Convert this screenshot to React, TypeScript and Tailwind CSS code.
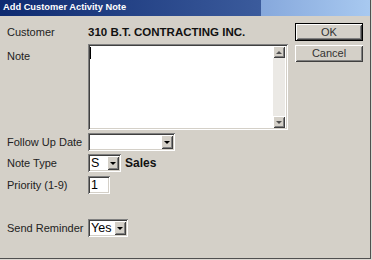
import React from "react";

const raised =
  "shadow-[inset_1px_1px_0_#ffffff,inset_-1px_-1px_0_#404040,inset_2px_2px_0_#d4d0c8,inset_-2px_-2px_0_#808080]";
const sunken =
  "shadow-[inset_1px_1px_0_#808080,inset_-1px_-1px_0_#ffffff,inset_2px_2px_0_#404040,inset_-2px_-2px_0_#d4d0c8]";

function DownArrow({ color = "border-t-black" }: { color?: string }) {
  return <div className={`w-0 h-0 border-x-[3px] border-x-transparent border-t-[3px] ${color}`} />;
}
function UpArrow() {
  return <div className="w-0 h-0 border-x-[3px] border-x-transparent border-b-[3px] border-b-[#505050]" />;
}

function DropBtn() {
  return (
    <div className={`w-[12px] h-full bg-[#d4d0c8] ${raised} flex items-center justify-center`}>
      <DownArrow />
    </div>
  );
}

function Combo({ w, text }: { w: string; text?: string }) {
  return (
    <div className={`${w} h-[18px] bg-white ${sunken} p-[2px] flex`}>
      <div className="flex-1 flex items-center pl-[1px] text-[12.5px] text-black leading-none">{text}</div>
      <DropBtn />
    </div>
  );
}

function Row({ label, children, className = "" }: { label: string; children?: React.ReactNode; className?: string }) {
  return (
    <div className={`flex items-center h-[18px] ${className}`}>
      <div className="w-[81px] text-[11px] text-[#222]">{label}</div>
      {children}
    </div>
  );
}

export default function App() {
  return (
    <div className="w-[372px] h-[260px] bg-[#dcd8d2] font-['Liberation_Sans',Arial,sans-serif]">
      <div className="w-[371px] h-[259px] bg-[#d4d0c8] border-r border-b border-[#505050] flex flex-col">
        <div className="h-[16px] bg-[linear-gradient(to_right,#0e2a70_0%,#3b5b9c_70.5%,#86a8dc_70.6%,#a8c9f0_100%)] flex items-center pl-[3px]">
          <span className="text-white font-bold text-[9.3px] leading-none">Add Customer Activity Note</span>
        </div>
        <div className="flex flex-1">
          <div className="w-[295px] pl-[7px] flex flex-col">
            <div className="flex items-center h-[17px] mt-[8px]">
              <div className="w-[81px] text-[11px] text-[#222]">Customer</div>
              <div className="font-bold text-[11.5px] text-[#111]">310 B.T. CONTRACTING INC.</div>
            </div>
            <div className="flex mt-[3px]">
              <div className="w-[81px] text-[11px] text-[#222] pt-[4px]">Note</div>
              <div className={`relative w-[200px] h-[86px] bg-white ${sunken} p-[2px] flex`}>
                <div className="flex-1 pl-[0px] pt-[1px]">
                  <div className="w-[1px] h-[12px] bg-black" />
                </div>
                <div className="w-[12px] h-full flex flex-col bg-[#ebe9e5] mr-[1px]">
                  <div className={`h-[12px] bg-[#d4d0c8] ${raised} flex items-center justify-center`}>
                    <UpArrow />
                  </div>
                  <div className="flex-1" />
                  <div className={`h-[12px] bg-[#d4d0c8] ${raised} flex items-center justify-center`}>
                    <DownArrow color="border-t-[#505050]" />
                  </div>
                </div>
              </div>
            </div>
            <Row label="Follow Up Date" className="mt-[3px]">
              <Combo w="w-[87px]" />
            </Row>
            <Row label="Note Type" className="mt-[3px]">
              <Combo w="w-[33px]" text="S" />
              <span className="ml-[4px] font-bold text-[12px] text-[#111]">Sales</span>
            </Row>
            <Row label="Priority (1-9)" className="mt-[4px]">
              <div className={`w-[22px] h-[18px] bg-white ${sunken} flex items-center pl-[3px] text-[12.5px] text-black leading-none`}>
                1
              </div>
            </Row>
            <Row label="Send Reminder" className="mt-[25px]">
              <Combo w="w-[40px]" text="Yes" />
            </Row>
          </div>
          <div className="flex flex-col pt-[7px] gap-[4px]">
            <div className="w-[68px] h-[18px] border border-black bg-[#d4d0c8]">
              <div className={`w-full h-full ${raised} flex items-center justify-center text-[11px] text-[#333]`}>OK</div>
            </div>
            <div className={`w-[68px] h-[17px] bg-[#d4d0c8] ${raised} flex items-center justify-center text-[11px] text-[#333]`}>
              Cancel
            </div>
          </div>
        </div>
      </div>
    </div>
  );
}
